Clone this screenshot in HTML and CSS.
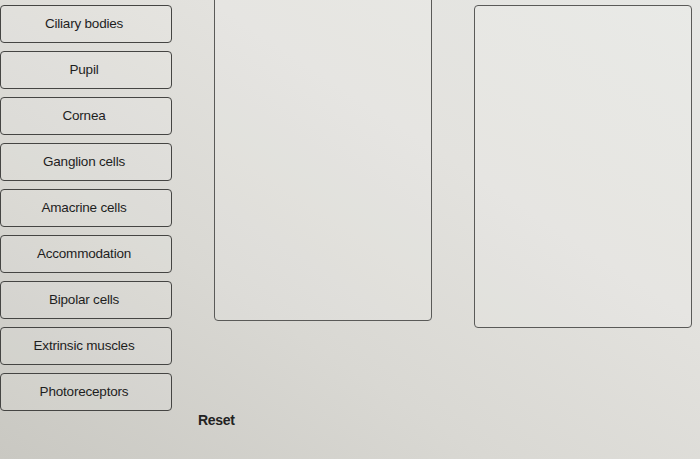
FILE: index.html
```html
<!DOCTYPE html>
<html lang="en">
<head>
<meta charset="utf-8">
<title>Eye structures</title>
<link rel="stylesheet" href="styles.css">
</head>
<body>
<div class="page">
  <div class="choices">
    <div class="chip">Ciliary bodies</div>
    <div class="chip">Pupil</div>
    <div class="chip">Cornea</div>
    <div class="chip">Ganglion cells</div>
    <div class="chip">Amacrine cells</div>
    <div class="chip">Accommodation</div>
    <div class="chip">Bipolar cells</div>
    <div class="chip">Extrinsic muscles</div>
    <div class="chip">Photoreceptors</div>
  </div>
  <div class="work">
    <div class="targets">
      <div class="drop drop-a"></div>
      <div class="drop drop-b"></div>
    </div>
    <div class="reset">Reset</div>
  </div>
</div>
</body>
</html>
```
FILE: styles.css
```css
html, body {
  margin: 0;
  padding: 0;
  height: 100%;
}

body {
  font-family: "Liberation Sans", Arial, sans-serif;
  color: #222;
  background: linear-gradient(to top right, #c9c8c2 0%, #d9d8d3 35%, #e3e2de 65%, #e6e7e4 100%);
  overflow: hidden;
}

.page {
  display: flex;
  align-items: flex-start;
}

.choices {
  display: flex;
  flex-direction: column;
  gap: 8px;
  padding-top: 5px;
  width: 174px;
}

.chip {
  box-sizing: border-box;
  height: 38px;
  width: 172px;
  border: 1.5px solid #454543;
  border-radius: 4px;
  background: rgba(255, 255, 255, 0.1);
  display: flex;
  align-items: center;
  justify-content: center;
  font-size: 13.5px;
  letter-spacing: -0.2px;
  color: #1e1e1e;
  padding-right: 4px;
  padding-bottom: 2px;
}

.work {
  display: flex;
  flex-direction: column;
  padding-left: 24px;
}

.targets {
  display: flex;
  align-items: flex-start;
  gap: 42px;
  padding-left: 16px;
}

.drop {
  box-sizing: border-box;
  width: 218px;
  border: 1px solid #5a5a58;
  border-radius: 4px;
  background: rgba(255, 255, 255, 0.12);
}

.drop-a {
  margin-top: -4px;
  height: 325px;
}

.drop-b {
  margin-top: 5px;
  height: 323px;
}

.reset {
  margin-top: 84px;
  font-size: 14px;
  font-weight: bold;
  color: #222;
  letter-spacing: -0.3px;
}
```
